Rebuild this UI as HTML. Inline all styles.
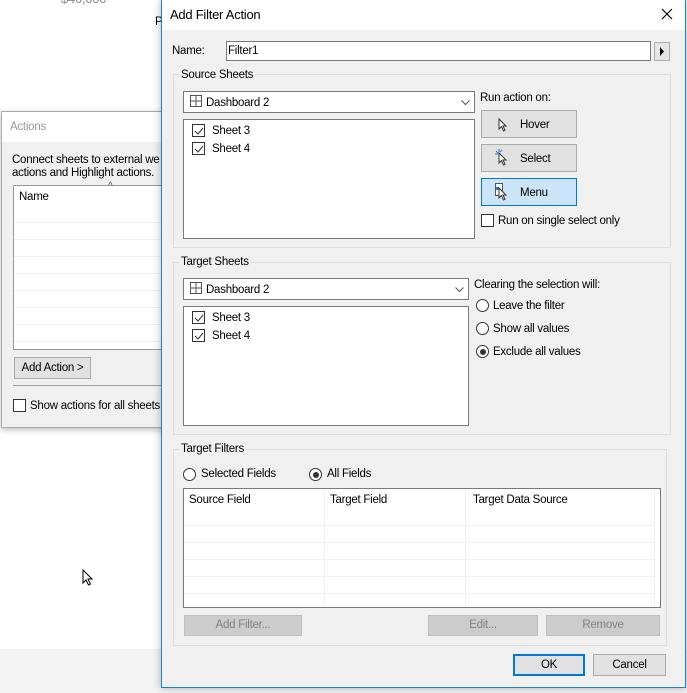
<!DOCTYPE html>
<html><head><meta charset="utf-8"><style>
*{box-sizing:border-box;margin:0;padding:0}
body{width:687px;height:693px;position:relative;overflow:hidden;background:#fff;font-family:"Liberation Sans",sans-serif;font-size:11.5px;letter-spacing:-0.25px;color:#000}
.a{position:absolute;white-space:nowrap}
.t{position:absolute;white-space:nowrap;line-height:14px}
.grp{position:absolute;border:1px solid #dcdcdc}
.box{position:absolute;background:#fff;border:1px solid #7a7a7a}
.btn{position:absolute;background:#e1e1e1;border:1px solid #adadad;text-align:center}
.dis{position:absolute;background:#cccccc;border:1px solid #bfbfbf;color:#838383;text-align:center;line-height:19px}
.cb{position:absolute;width:13px;height:13px;border:1px solid #333;background:#fff}
.rd{position:absolute;width:13px;height:13px;border:1px solid #333;border-radius:50%;background:#fff}
.rd.on::after{content:"";position:absolute;left:2.5px;top:2.5px;width:6px;height:6px;border-radius:50%;background:#333}
.hl{position:absolute;height:1px;background:#f0f0f0}
</style></head><body>
<div class="t" style="left:61px;top:-8px;color:#888;font-size:13px">$40,000</div>
<div class="t" style="left:155px;top:15px">P</div>
<div class="a" style="left:0;top:649px;width:687px;height:44px;background:#f3f3f3"></div>
<!-- Actions panel -->
<div class="a" style="left:1px;top:111px;width:170px;height:317px;background:#f0f0f0;border:1px solid #aaa;box-shadow:0 2px 6px rgba(0,0,0,.25)"></div>
<div class="a" style="left:2px;top:112px;width:168px;height:30px;background:#fff"></div>
<div class="t" style="left:10px;top:120px;color:#999">Actions</div>
<div class="t" style="left:12px;top:153px">Connect sheets to external we</div>
<div class="t" style="left:12px;top:166px">actions and Highlight actions.</div>
<div class="box" style="left:13px;top:185px;width:160px;height:165px;border-color:#999"></div>
<div class="t" style="left:19px;top:190px">Name</div>
<div class="t" style="left:108px;top:180px;font-size:10px;color:#555">^</div>
<div class="hl" style="left:14px;top:222px;width:150px"></div><div class="hl" style="left:14px;top:239px;width:150px"></div><div class="hl" style="left:14px;top:256px;width:150px"></div><div class="hl" style="left:14px;top:273px;width:150px"></div><div class="hl" style="left:14px;top:290px;width:150px"></div><div class="hl" style="left:14px;top:307px;width:150px"></div><div class="hl" style="left:14px;top:324px;width:150px"></div><div class="hl" style="left:14px;top:341px;width:150px"></div>
<div class="btn" style="left:14px;top:357px;width:77px;height:22px;line-height:20px">Add Action &gt;</div>
<div class="a" style="left:13px;top:385px;width:150px;height:1px;background:#a0a0a0"></div>
<div class="cb" style="left:13px;top:399px"></div>
<div class="t" style="left:30px;top:399px">Show actions for all sheets</div>
<!-- cursor -->
<svg class="a" style="left:82px;top:569px" width="14" height="20" viewBox="0 0 14 20"><path d="M1 1 L1 14 L4 11 L6.5 16 L8.5 15 L6 10 L10 10 Z" fill="#fff" stroke="#000" stroke-width="1"/></svg>
<!-- Dialog -->
<div class="a" style="left:161px;top:0;width:525px;height:688px;background:#f0f0f0;border:1px solid #1883d7;border-top:none;box-shadow:0 0 8px rgba(0,0,0,.3)"></div>
<div class="a" style="left:162px;top:0;width:523px;height:30px;background:#fff"></div>
<div class="t" style="left:170px;top:8px;font-size:13px">Add Filter Action</div>
<svg class="a" style="left:661px;top:8px" width="12" height="12"><path d="M1 1L11 11M11 1L1 11" stroke="#000" stroke-width="1.2"/></svg>
<div class="t" style="left:172px;top:44px">Name:</div>
<div class="box" style="left:226px;top:41px;width:425px;height:20px"></div>
<div class="t" style="left:228px;top:44px">Filter1</div>
<div class="btn" style="left:654px;top:42px;width:16px;height:19px;background:#e5e5e5"></div>
<svg class="a" style="left:659px;top:47px" width="6" height="9"><path d="M1 0L5 4.5L1 9Z" fill="#000"/></svg>
<!-- Source Sheets -->
<div class="grp" style="left:173px;top:74px;width:498px;height:174px"></div>
<div class="t" style="left:179px;top:68px;background:#f0f0f0;padding:0 2px">Source Sheets</div>
<div class="box" style="left:183px;top:91px;width:292px;height:22px"></div>
<svg class="a" style="left:190px;top:95px" width="12" height="12"><path d="M.5 .5H11.5V11.5H.5ZM6 .5V11.5M.5 6H11.5" fill="none" stroke="#555"/></svg>
<div class="t" style="left:206px;top:96px">Dashboard 2</div>
<svg class="a" style="left:461px;top:100px" width="9" height="6"><path d="M.5 .5L4.5 4.5L8.5 .5" fill="none" stroke="#555"/></svg>
<div class="box" style="left:183px;top:119px;width:292px;height:120px"></div>
<div class="cb" style="left:192px;top:124px"></div><svg class="a" style="left:194px;top:127px" width="10" height="8"><path d="M1 4L4 7L9 1" fill="none" stroke="#333"/></svg>
<div class="t" style="left:212px;top:124px">Sheet 3</div>
<div class="cb" style="left:192px;top:142px"></div><svg class="a" style="left:194px;top:145px" width="10" height="8"><path d="M1 4L4 7L9 1" fill="none" stroke="#333"/></svg>
<div class="t" style="left:212px;top:142px">Sheet 4</div>
<div class="t" style="left:480px;top:91px">Run action on:</div>
<div class="btn" style="left:481px;top:110px;width:96px;height:28px;background:#e1e1e1"></div>
<svg class="a" style="left:498px;top:118px" width="10" height="14"><path d="M1 1V11L3.5 8.5L5.5 13L7 12.3L5 8H8Z" fill="#fff" stroke="#333"/></svg>
<div class="t" style="left:520px;top:118px">Hover</div>
<div class="btn" style="left:481px;top:144px;width:96px;height:28px"></div>
<svg class="a" style="left:495px;top:149px" width="14" height="18"><path d="M1 2L3 4M4 0V3M7 1L5 3M0 5H3" stroke="#2a7ad8"/><path d="M4 4V14L6.5 11.5L8.5 16L10 15.3L8 11H11Z" fill="#fff" stroke="#333"/></svg>
<div class="t" style="left:520px;top:152px">Select</div>
<div class="btn" style="left:481px;top:178px;width:96px;height:28px;background:#cce4f7;border-color:#0078d7"></div>
<svg class="a" style="left:495px;top:183px" width="14" height="18"><path d="M.5 .5H7.5V12.5H.5Z" fill="#fff" stroke="#555"/><rect x="1" y="4" width="3" height="3" fill="#2a7ad8"/><path d="M4 5V15L6.5 12.5L8.5 17L10 16.3L8 12H11Z" fill="#fff" stroke="#333"/></svg>
<div class="t" style="left:520px;top:186px">Menu</div>
<div class="cb" style="left:481px;top:214px"></div>
<div class="t" style="left:498px;top:214px">Run on single select only</div>
<!-- Target Sheets -->
<div class="grp" style="left:173px;top:262px;width:498px;height:173px"></div>
<div class="t" style="left:179px;top:255px;background:#f0f0f0;padding:0 2px">Target Sheets</div>
<div class="box" style="left:183px;top:278px;width:286px;height:22px"></div>
<svg class="a" style="left:190px;top:282px" width="12" height="12"><path d="M.5 .5H11.5V11.5H.5ZM6 .5V11.5M.5 6H11.5" fill="none" stroke="#555"/></svg>
<div class="t" style="left:206px;top:283px">Dashboard 2</div>
<svg class="a" style="left:455px;top:287px" width="9" height="6"><path d="M.5 .5L4.5 4.5L8.5 .5" fill="none" stroke="#555"/></svg>
<div class="box" style="left:183px;top:306px;width:286px;height:120px"></div>
<div class="cb" style="left:192px;top:311px"></div><svg class="a" style="left:194px;top:314px" width="10" height="8"><path d="M1 4L4 7L9 1" fill="none" stroke="#333"/></svg>
<div class="t" style="left:212px;top:311px">Sheet 3</div>
<div class="cb" style="left:192px;top:329px"></div><svg class="a" style="left:194px;top:332px" width="10" height="8"><path d="M1 4L4 7L9 1" fill="none" stroke="#333"/></svg>
<div class="t" style="left:212px;top:329px">Sheet 4</div>
<div class="t" style="left:474px;top:278px">Clearing the selection will:</div>
<div class="rd" style="left:476px;top:299px"></div><div class="t" style="left:493px;top:299px">Leave the filter</div>
<div class="rd" style="left:476px;top:322px"></div><div class="t" style="left:493px;top:322px">Show all values</div>
<div class="rd on" style="left:476px;top:345px"></div><div class="t" style="left:493px;top:345px">Exclude all values</div>
<!-- Target Filters -->
<div class="grp" style="left:173px;top:449px;width:494px;height:197px"></div>
<div class="t" style="left:179px;top:442px;background:#f0f0f0;padding:0 2px">Target Filters</div>
<div class="rd" style="left:183px;top:468px"></div><div class="t" style="left:201px;top:467px">Selected Fields</div>
<div class="rd on" style="left:309px;top:468px"></div><div class="t" style="left:327px;top:467px">All Fields</div>
<div class="box" style="left:183px;top:488px;width:478px;height:120px"></div>
<div class="t" style="left:189px;top:493px">Source Field</div>
<div class="t" style="left:330px;top:493px">Target Field</div>
<div class="t" style="left:473px;top:493px">Target Data Source</div>
<div class="a" style="left:324px;top:489px;width:1px;height:118px;background:#f0f0f0"></div>
<div class="a" style="left:465px;top:489px;width:1px;height:118px;background:#f0f0f0"></div>
<div class="a" style="left:654px;top:489px;width:1px;height:118px;background:#f0f0f0"></div>
<div class="hl" style="left:184px;top:525px;width:470px"></div><div class="hl" style="left:184px;top:542px;width:470px"></div><div class="hl" style="left:184px;top:559px;width:470px"></div><div class="hl" style="left:184px;top:576px;width:470px"></div><div class="hl" style="left:184px;top:593px;width:470px"></div>
<div class="dis" style="left:184px;top:615px;width:118px;height:21px">Add Filter...</div>
<div class="dis" style="left:428px;top:615px;width:110px;height:21px">Edit...</div>
<div class="dis" style="left:546px;top:615px;width:114px;height:21px">Remove</div>
<div class="btn" style="left:513px;top:654px;width:72px;height:22px;border:2px solid #0078d7;line-height:18px">OK</div>
<div class="btn" style="left:593px;top:654px;width:73px;height:22px;line-height:20px">Cancel</div>
</body></html>
